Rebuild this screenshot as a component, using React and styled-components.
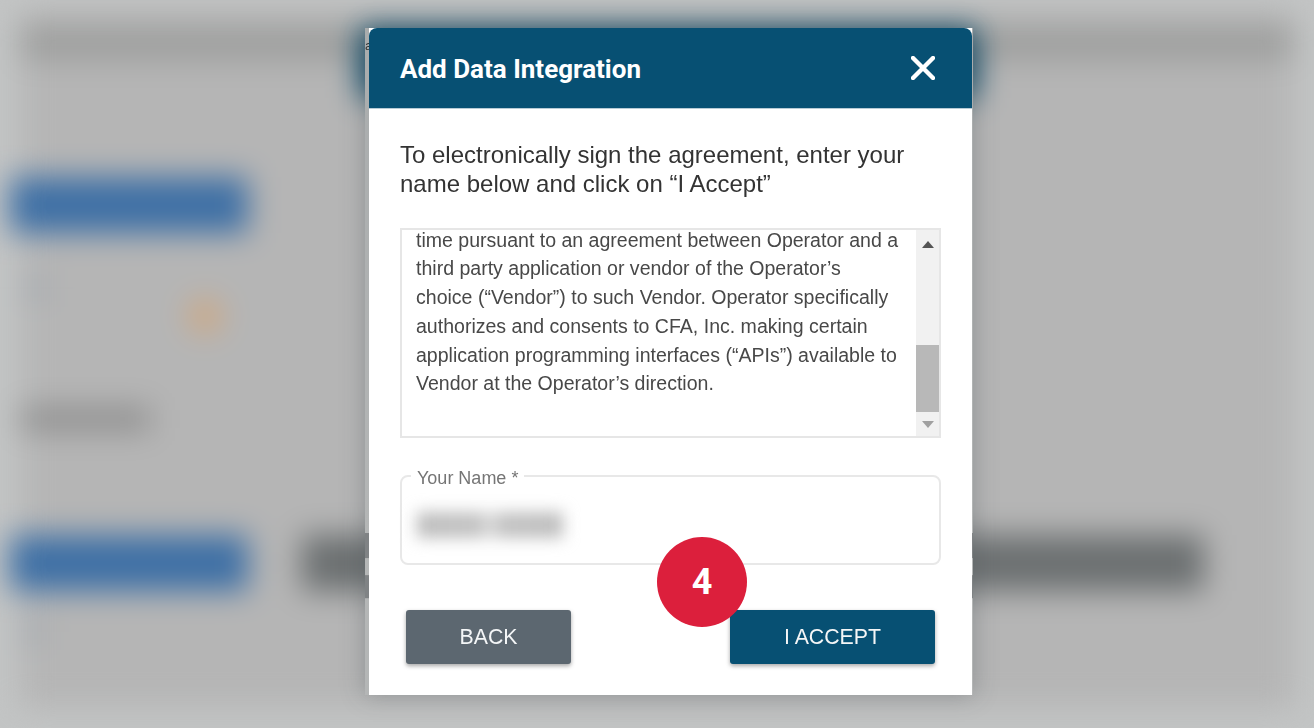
import React from 'react'
import styled, { createGlobalStyle } from 'styled-components'

const GlobalStyle = createGlobalStyle`
  html, body {
    margin: 0;
    padding: 0;
    background: #c3c5c5;
    font-family: "Liberation Sans", Arial, sans-serif;
  }
`

const App = () => {
  return (
    <Stage>
      <GlobalStyle />
      <BlurredPage>
        <Sheet>
          <TopBar>
            <ModalGlow />
          </TopBar>
          <BlueBar $top={117} />
          <InfoRow>
            <SmallNote />
            <OrangeDot />
          </InfoRow>
          <GreyLabel />
          <BottomRow>
            <BlueBar $top={0} />
            <DarkBar />
          </BottomRow>
          <SmallNote $top={30} />
        </Sheet>
      </BlurredPage>

      <Modal>
        <EdgeLetter>a</EdgeLetter>
        <Header>
          <Title>Add Data Integration</Title>
          <CloseIcon viewBox="0 0 24 24">
            <path d="M2 2 L22 22 M22 2 L2 22" />
          </CloseIcon>
        </Header>
        <Body>
          <Prompt>To electronically sign the agreement, enter your name below and click on “I Accept”</Prompt>
          <AgreementBox>
            <AgreementPane>
              <AgreementText>
                time pursuant to an agreement between Operator and a third party application or vendor of the Operator’s choice (“Vendor”) to such Vendor. Operator specifically authorizes and consents to CFA, Inc. making certain application programming interfaces (“APIs”) available to Vendor at the Operator’s direction.
              </AgreementText>
            </AgreementPane>
            <ScrollTrack>
              <ArrowSlot $height={28}><Arrow /></ArrowSlot>
              <ScrollThumb />
              <ArrowSlot $height={24}><Arrow $down /></ArrowSlot>
            </ScrollTrack>
          </AgreementBox>
          <NameField>
            <NameLegend>Your Name *</NameLegend>
            <HiddenName />
          </NameField>
          <Actions>
            <ActionButton $width={165} $color="#5c6770">BACK</ActionButton>
            <ActionButton $width={205} $color="#075073">I ACCEPT</ActionButton>
          </Actions>
        </Body>
        <StepBadge>4</StepBadge>
      </Modal>
    </Stage>
  )
}

const Stage = styled.div`
  position: relative;
  width: 1314px;
  height: 728px;
  overflow: hidden;
  background: #c3c5c5;
`

const BlurredPage = styled.div`
  height: 100%;
  padding: 10px 20px 20px;
  box-sizing: border-box;
  filter: blur(15px);
`

const Sheet = styled.div`
  height: 100%;
  padding-top: 16px;
  box-sizing: border-box;
  background: #b5b5b5;
`

const TopBar = styled.div`
  height: 34px;
  background: #9e9f9e;
`

const ModalGlow = styled.div`
  width: 618px;
  height: 70px;
  margin-left: 339px;
  position: relative;
  top: 2px;
  background: #11506f;
`

const BlueBar = styled.div`
  width: 238px;
  height: 56px;
  margin: ${(props) => props.$top}px 0 0 -10px;
  flex-shrink: 0;
  background: #3f70a5;
`

const InfoRow = styled.div`
  display: flex;
  align-items: flex-start;
  height: 64px;
  margin-top: 45px;
  padding-left: 4px;
`

const SmallNote = styled.div`
  width: 24px;
  height: 20px;
  margin-top: ${(props) => props.$top || 0}px;
  background: #a3a8ae;
`

const OrangeDot = styled.div`
  width: 34px;
  height: 34px;
  margin: 21px 0 0 140px;
  border-radius: 50%;
  background: #d0a880;
`

const GreyLabel = styled.div`
  width: 130px;
  height: 24px;
  margin-top: 65px;
  background: #8f8f8f;
`

const BottomRow = styled.div`
  display: flex;
  margin-top: 104px;
`

const DarkBar = styled.div`
  width: 902px;
  height: 56px;
  margin-left: 54px;
  background: #6c7071;
`

const Modal = styled.div`
  position: absolute;
  left: 365px;
  top: 28px;
  width: 603px;
  height: 667px;
  border-style: solid;
  border-width: 0 1px 0 4px;
  border-image: linear-gradient(
    #a9acad 0,
    #b4b6b6 504px,
    #808385 505px,
    #808385 529px,
    #b4b6b6 530px,
    #b4b6b6 546px,
    #808385 547px,
    #808385 569px,
    #b4b6b6 570px
  ) 1;
  background: #fff;
  box-shadow: 0 0 22px rgba(70, 78, 82, 0.35);
  filter: blur(0.35px);
`

const EdgeLetter = styled.span`
  position: absolute;
  left: -4px;
  top: 11px;
  width: 4px;
  overflow: hidden;
  color: #333;
  font-size: 13px;
  line-height: 14px;
`

const Header = styled.header`
  display: flex;
  align-items: center;
  justify-content: space-between;
  height: 81px;
  padding: 0 37px 0 31px;
  box-sizing: border-box;
  border-radius: 8px 8px 0 0;
  border-bottom: 1px solid #b8cbd6;
  background: #075073;
`

const Title = styled.h1`
  margin: 2px 0 0;
  color: #fff;
  font-family: Roboto, "Liberation Sans", sans-serif;
  font-size: 26px;
  font-weight: 700;
  line-height: 30px;
`

const CloseIcon = styled.svg`
  width: 24px;
  height: 24px;
  fill: none;
  stroke: #fff;
  stroke-width: 4.4;
  stroke-linecap: round;
`

const Body = styled.div`
  padding: 31px 31px 0;
`

const Prompt = styled.p`
  margin: 0;
  color: #333;
  font-size: 24px;
  line-height: 29px;
`

const AgreementBox = styled.div`
  display: flex;
  justify-content: space-between;
  height: 210px;
  margin-top: 30px;
  box-sizing: border-box;
  border: 2px solid #e6e6e6;
`

const AgreementPane = styled.div`
  padding-left: 14px;
  overflow: hidden;
`

const AgreementText = styled.p`
  width: 486px;
  margin: -4.5px 0 0;
  color: #484848;
  font-size: 19.55px;
  line-height: 28.8px;
`

const ScrollTrack = styled.div`
  display: flex;
  flex-direction: column;
  justify-content: flex-end;
  width: 23px;
  background: #f1f1f1;
`

const ArrowSlot = styled.div`
  display: flex;
  align-items: center;
  justify-content: center;
  height: ${(props) => props.$height}px;
  &:first-child {
    margin-bottom: auto;
  }
`

const Arrow = styled.span`
  width: 0;
  height: 0;
  border-left: 6px solid transparent;
  border-right: 6px solid transparent;
  border-bottom: ${(props) => (props.$down ? '0' : '7px solid #555')};
  border-top: ${(props) => (props.$down ? '7px solid #a0a0a0' : '0')};
`

const ScrollThumb = styled.div`
  height: 67px;
  background: #b8b8b8;
`

const NameField = styled.fieldset`
  height: 101px;
  margin: 26px 0 0;
  padding: 0 10px;
  box-sizing: border-box;
  border: 2px solid #e8e8e8;
  border-radius: 8px;
`

const NameLegend = styled.legend`
  margin-left: -1px;
  padding: 4px 6px 0;
  color: #757575;
  font-size: 18px;
  line-height: 20px;
`

const HiddenName = styled.div`
  width: 146px;
  height: 26px;
  margin: 24px 0 0 5px;
  background: linear-gradient(90deg, #bdbdbd 0, #c2c2c2 44%, #e6e6e6 50%, #c2c2c2 56%, #bdbdbd 100%);
  filter: blur(8px);
`

const Actions = styled.div`
  display: flex;
  justify-content: space-between;
  margin-top: 45px;
  padding: 0 6px;
`

const ActionButton = styled.button`
  width: ${(props) => props.$width}px;
  height: 54px;
  padding: 0;
  border: 0;
  border-radius: 3px;
  background: ${(props) => props.$color};
  box-shadow: 0 2px 4px rgba(0, 0, 0, 0.35);
  color: #f4f6f7;
  font-family: "Liberation Sans", Arial, sans-serif;
  font-size: 21.3px;
`

const StepBadge = styled.div`
  position: absolute;
  left: 288px;
  top: 509px;
  display: flex;
  align-items: center;
  justify-content: center;
  width: 90px;
  height: 90px;
  border-radius: 50%;
  background: #dc1f3c;
  color: #fff;
  font-family: Roboto, "Liberation Sans", sans-serif;
  font-size: 36px;
  font-weight: 700;
`

export default App
